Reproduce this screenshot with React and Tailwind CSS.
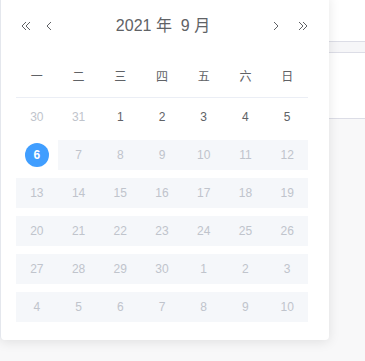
import React from 'react';

const weekDays = ['一', '二', '三', '四', '五', '六', '日'];

// 当前面板显示的日期，prev/next 表示上/下月
const rows = [
  [
    { d: 30, t: 'prev' }, { d: 31, t: 'prev' }, { d: 1 }, { d: 2 }, { d: 3 }, { d: 4 }, { d: 5 },
  ],
  [
    { d: 6, t: 'today' }, { d: 7, t: 'off' }, { d: 8, t: 'off' }, { d: 9, t: 'off' },
    { d: 10, t: 'off' }, { d: 11, t: 'off' }, { d: 12, t: 'off' },
  ],
  [13, 14, 15, 16, 17, 18, 19].map((d) => ({ d, t: 'off' })),
  [20, 21, 22, 23, 24, 25, 26].map((d) => ({ d, t: 'off' })),
  [27, 28, 29, 30, 1, 2, 3].map((d) => ({ d, t: 'off' })),
  [4, 5, 6, 7, 8, 9, 10].map((d) => ({ d, t: 'off' })),
];

const Chevron = ({ dir = 'left', double = false }) => {
  const pts = dir === 'left' ? ['5,1 1,5 5,9', '9,1 5,5 9,9'] : ['1,1 5,5 1,9', '5,1 9,5 5,9'];
  return (
    <svg width={double ? 10 : 6} height="10" viewBox={double ? '0 0 10 10' : '0 0 6 10'} fill="none">
      <polyline points={pts[0]} stroke="#606266" strokeWidth="1" />
      {double && <polyline points={pts[1]} stroke="#606266" strokeWidth="1" />}
    </svg>
  );
};

const Cell = ({ d, t }) => {
  if (t === 'today') {
    return (
      <div className="flex items-center justify-center">
        <span className="w-[24px] h-[24px] rounded-full bg-[#409eff] text-white font-bold flex items-center justify-center">
          {d}
        </span>
      </div>
    );
  }
  const color = t === 'prev' || t === 'off' ? 'text-[#c0c4cc]' : 'text-[#606266]';
  return <div className={`flex items-center justify-center ${color}`}>{d}</div>;
};

export default function App() {
  return (
    <div
      className="relative w-[365px] h-[361px] overflow-hidden bg-[#f8f8f9]"
      style={{ fontFamily: '"Liberation Sans", "Noto Sans CJK SC", sans-serif' }}
    >
      {/* 背景页面 */}
      <div className="h-[42px] bg-white border-b border-[#dcdde6]" />
      <div className="h-[11px] bg-[#f6f6f8] border-b border-[#dcdde6]" />
      <div className="h-[66px] bg-white border-b border-[#dcdde6]" />

      {/* 日期弹层 */}
      <div className="absolute left-0 top-[-6px] w-[329px] h-[346px] bg-white rounded-[4px] border-l border-[#e4e7ed] shadow-[0_2px_12px_0_rgba(0,0,0,0.1)]">
        <div className="pl-[15px] pr-[21px] pt-[20px]">
          <div className="relative h-[24px] flex items-center">
            <button className="w-[10px] ml-[5px] flex items-center"><Chevron dir="left" double /></button>
            <button className="w-[6px] ml-[15px] flex items-center"><Chevron dir="left" /></button>
            <div className="flex-1 text-center text-[16px] text-[#606266] pl-[1px]">2021 年&nbsp;&nbsp;9 月</div>
            <button className="w-[6px] mr-[19px] flex items-center"><Chevron dir="right" /></button>
            <button className="w-[10px] flex items-center"><Chevron dir="right" double /></button>
          </div>

          <div className="mt-[19px] h-[41px] grid grid-cols-7 border-b border-[#ebeef5] text-[12px] text-[#606266]">
            {weekDays.map((w) => (
              <div key={w} className="flex items-center justify-center pb-[1px]">{w}</div>
            ))}
          </div>

          <div className="mt-[4px] flex flex-col gap-[8px] text-[12px]">
            {rows.map((r, i) => (
              <div key={i} className="h-[30px] grid grid-cols-7">
                {r.map((c, j) => (
                  <div
                    key={j}
                    className={`flex items-center justify-center ${c.t === 'off' ? 'bg-[#f5f7fa]' : ''}`}
                  >
                    <Cell {...c} />
                  </div>
                ))}
              </div>
            ))}
          </div>
        </div>
      </div>
    </div>
  );
}
